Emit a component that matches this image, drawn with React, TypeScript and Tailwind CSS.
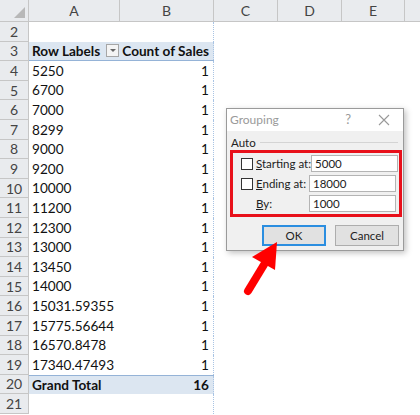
import React from "react";

const rows: [string, string][] = [
    ["5250", "1"], ["6700", "1"], ["7000", "1"], ["8299", "1"], ["9000", "1"],
    ["9200", "1"], ["10000", "1"], ["11200", "1"], ["12300", "1"], ["13000", "1"],
    ["13450", "1"], ["14000", "1"], ["15031.59355", "1"], ["15775.56644", "1"],
    ["16570.8478", "1"], ["17340.47493", "1"],
];

const font = { fontFamily: "Lato, 'Liberation Sans', sans-serif" };

function RowNum({ n }: { n: number }) {
    return (
        <div className="w-[29px] shrink-0 h-full flex items-center justify-center bg-[#e9ebee] border-r border-b border-[#c6c6c6] text-[#444] text-[14px]">
            {n}
        </div>
    );
}

function Cells({ a, b, kind }: { a?: React.ReactNode; b?: React.ReactNode; kind?: "head" | "total" }) {
    const pivot = kind ? "bg-[#dce6f1]" : "";
    const border = kind === "head" ? "border-b border-[#95b3d7]" : kind === "total" ? "border-t border-[#95b3d7]" : "";
    return (
        <>
            <div className={`w-[185px] shrink-0 h-full flex whitespace-nowrap ${pivot} ${border} ${kind ? "font-bold" : ""}`}>
                <div className="w-[91px] shrink-0 pl-[3px] flex items-center">{a}</div>
                <div className="w-[94px] shrink-0 pr-[4px] flex items-center justify-end border-r border-dotted border-[#a9c4e4]">{b}</div>
            </div>
            <div className="flex-1" />
        </>
    );
}

export default function App() {
    return (
        <div className="relative w-[420px] h-[415px] bg-white overflow-hidden text-[#111] text-[13.6px]" style={font}>
            {/* column headers */}
            <div className="flex h-[22px] bg-[#e9ebee] border-b border-[#c6c6c6] text-[#444] text-[14px]">
                <div className="w-[29px] shrink-0 border-r border-[#c6c6c6] relative">
                    <div className="absolute right-[3px] bottom-[3px] w-0 h-0 border-l-[11px] border-l-transparent border-b-[11px] border-b-[#b8b8b8]" />
                </div>
                {[["A", 91], ["B", 94], ["C", 64], ["D", 64], ["E", 63]].map(([l, w]) => (
                    <div key={l as string} style={{ width: w as number }} className="shrink-0 flex items-center justify-center border-r border-[#c6c6c6]">{l}</div>
                ))}
                <div className="flex-1" />
            </div>

            <div className="flex h-[19.6px]"><RowNum n={2} /><Cells /></div>
            <div className="flex h-[19.6px]">
                <RowNum n={3} />
                <Cells
                    kind="head"
                    a={<span className="flex items-center w-full">Row Labels
                        <span className="ml-auto mr-[1px] w-[13px] h-[13px] border border-[#a6a6a6] bg-[#f4f4f4] flex items-center justify-center">
                            <span className="w-0 h-0 border-l-[3px] border-r-[3px] border-t-[3px] border-l-transparent border-r-transparent border-t-[#666]" />
                        </span></span>}
                    b="Count of Sales"
                />
            </div>
            {rows.map(([a, b], i) => (
                <div key={i} className="flex h-[19.6px]"><RowNum n={i + 4} /><Cells a={a} b={b} /></div>
            ))}
            <div className="flex h-[19.6px]"><RowNum n={20} /><Cells kind="total" a="Grand Total" b="16" /></div>
            <div className="flex h-[19.6px]"><RowNum n={21} /><Cells /></div>

            {/* Grouping dialog */}
            <div className="absolute left-[226px] top-[108px] w-[178px] h-[143px] bg-[#f0f0f0] border border-[#9a9a9a] shadow-[2px_2px_6px_rgba(0,0,0,0.25)] text-[11.5px] whitespace-nowrap">
                <div className="h-[22px] bg-white flex items-center pl-[3px] text-[#9a9a9a] text-[12px]">
                    <span>Grouping</span>
                    <span className="ml-auto mr-[27px] text-[13px]">?</span>
                    <svg width="12" height="12" viewBox="0 0 12 12" className="mr-[13px]"><path d="M1 1L11 11M11 1L1 11" stroke="#999" strokeWidth="1.1" /></svg>
                </div>
                <div className="flex items-center gap-[4px] pl-[4px] pr-[5px] mt-[5px] h-[13px] text-[#222]">
                    <span>Auto</span>
                    <div className="flex-1 border-t border-[#d4d4d4]" />
                </div>
                <div className="ml-[3px] mr-[1px] mt-[1px] h-[67px] border-[3px] border-[#e8101a] flex flex-col justify-center gap-[3px] pl-[8px] pr-[3px] text-[#222]">
                    {[["S", "tarting at:", "5000", true], ["E", "nding at:", "18000", true], ["B", "y:", "1000", false]].map(([u, rest, v, cb]) => (
                        <div key={u as string} className="flex items-center h-[17px]">
                            <span className={`w-[12px] h-[12px] border border-[#333] bg-white mr-[3px] shrink-0 ${cb ? "" : "invisible"}`} />
                            <span><u>{u as string}</u>{rest as string}</span>
                            <div className="ml-auto w-[87px] shrink-0 h-[17px] bg-white border border-[#b4b4b4] flex items-center pl-[3px]">{v as string}</div>
                        </div>
                    ))}
                </div>
                <div className="flex gap-[9px] pl-[35px] mt-[8px]">
                    <div className="w-[64px] h-[21px] bg-[#e1e1e1] border-2 border-[#2b8ee0] flex items-center justify-center text-[#222]">OK</div>
                    <div className="w-[64px] h-[21px] bg-[#e1e1e1] border border-[#adadad] flex items-center justify-center text-[#222]">Cancel</div>
                </div>
            </div>

            {/* red arrow */}
            <svg className="absolute left-0 top-0 pointer-events-none" width="420" height="415">
                <line x1="248" y1="291" x2="265" y2="263" stroke="#f00" strokeWidth="8" strokeLinecap="round" />
                <polygon points="277,242 252,257 275,270" fill="#f00" />
            </svg>
        </div>
    );
}
